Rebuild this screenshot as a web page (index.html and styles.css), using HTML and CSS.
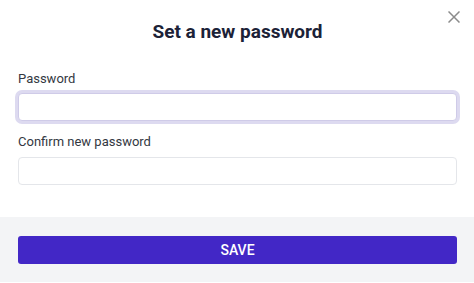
FILE: index.html
```html
<!DOCTYPE html>
<html>
<head>
<meta charset="utf-8">
<link rel="stylesheet" href="styles.css">
</head>
<body>
<div class="modal">
  <button class="close" aria-label="Close">
    <svg width="12" height="12" viewBox="0 0 12 12"><path d="M0.5 0.5L11.5 11.5M11.5 0.5L0.5 11.5" stroke="#8b8b8b" stroke-width="1.5" fill="none"/></svg>
  </button>
  <div class="content">
    <h1 class="title">Set a new password</h1>
    <label class="label first">Password</label>
    <input class="field focused" type="password">
    <label class="label second">Confirm new password</label>
    <input class="field" type="password">
  </div>
  <div class="footer">
    <button class="save">SAVE</button>
  </div>
</div>
</body>
</html>
```
FILE: styles.css
```css
* { box-sizing: border-box; }
html, body { margin: 0; padding: 0; background: #ffffff; }
body { font-family: Roboto, "Liberation Sans", sans-serif; }
.modal { position: relative; width: 474px; height: 283px; background: #fff; }
.close { position: absolute; top: 11px; left: 448px; width: 13px; height: 13px; padding: 0; border: 0; background: none; display: flex; }
.content { padding: 20px 17px 0 18px; display: flex; flex-direction: column; }
.title { margin: 0; font-size: 19px; line-height: 24px; font-weight: 700; color: #1c2237; text-align: center; }
.label { font-size: 13px; line-height: 16px; color: #333842; }
.label.first { margin-top: 27px; }
.label.second { margin-top: 13px; }
.field { height: 28px; width: 100%; border: 1px solid #e4e6ea; border-radius: 4px; background: #fff; outline: none; }
.first + .field { margin-top: 6px; border-color: #cfcbe8; box-shadow: 0 0 0 3px #dddaf0; }
.second + .field { margin-top: 7px; }
.footer { margin-top: 32px; height: 65px; background: #f3f4f6; padding: 19px 17px 0 18px; }
.save { display: block; width: 100%; height: 28px; border: 0; border-radius: 3px; background: #4227c6; color: #fff; font-family: Roboto, "Liberation Sans", sans-serif; font-size: 14px; font-weight: 500; padding: 0; }
```
